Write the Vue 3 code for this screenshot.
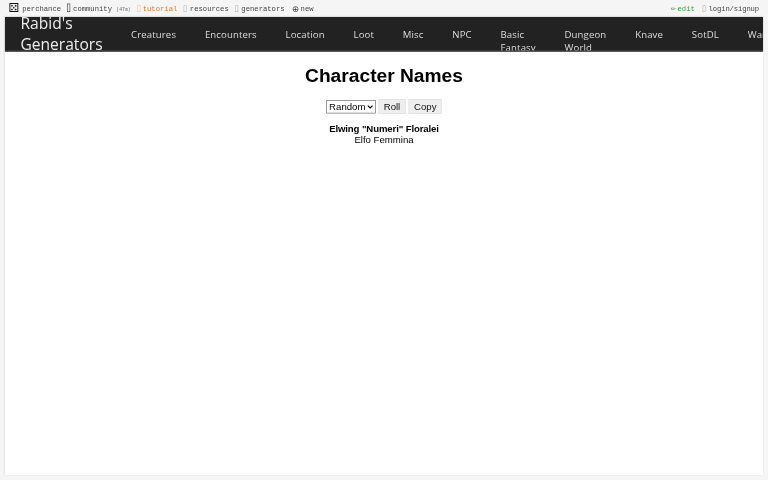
<script setup>
const navItems = ['Creatures', 'Encounters', 'Location', 'Loot', 'Misc', 'NPC', 'Basic Fantasy', 'Dungeon World', 'Knave', 'SotDL', 'Warlock']
</script>

<template>
  <div class="viewport">
    <div class="page">
      <header class="topbar">
        <div class="links">
          <span class="die">⚄</span>
          <a class="link">perchance</a>
          <span class="tofu dark"></span>
          <a class="link">community <small>(47m)</small></a>
          <span class="tofu peach"></span>
          <a class="link orange">tutorial</a>
          <span class="tofu"></span>
          <a class="link">resources</a>
          <span class="tofu"></span>
          <a class="link">generators</a>
          <span class="plus">⊕</span>
          <a class="link">new</a>
        </div>
        <div class="links">
          <span class="pencil">✏</span>
          <a class="link green">edit</a>
          <span class="tofu last"></span>
          <a class="link login">login/signup</a>
        </div>
      </header>
      <div class="frame">
        <nav class="nav">
          <div class="brand">Rabid's Generators</div>
          <a v-for="item in navItems" :key="item" class="nav-item"><span>{{ item }}</span></a>
        </nav>
        <main class="main">
          <h1>Character Names</h1>
          <div class="controls">
            <select class="select"><option>Random</option></select>
            <button class="btn">Roll</button>
            <button class="btn">Copy</button>
          </div>
          <div class="result">
            <b>Elwing "Numeri" Floralei</b>
            <div>Elfo Femmina</div>
          </div>
        </main>
      </div>
    </div>
  </div>
</template>

<style>
html, body { margin: 0; padding: 0; background: #f5f5f5; overflow: hidden; }
</style>

<style scoped>
.viewport { width: 768px; height: 480px; overflow: hidden; }
.page { width: 1280px; height: 800px; display: flex; flex-direction: column; background: #f5f5f5; overflow: hidden; transform: scale(0.6); transform-origin: 0 0; filter: blur(0.35px); }
.topbar { flex: none; height: 28px; display: flex; justify-content: space-between; align-items: center; padding: 1px 15px 0 14px; font-family: "Liberation Mono", monospace; font-size: 12px; color: #444; box-sizing: border-box; }
.links { display: flex; align-items: center; }
.link { white-space: pre; }
.link small { font-size: 8px; color: #666; }
.die { font-family: "DejaVu Sans", sans-serif; font-size: 20px; line-height: 20px; width: 23px; color: #111; margin-top: -3px; }
.tofu { display: inline-block; box-sizing: border-box; border: 1px solid #bbb; height: 11px; width: 5px; margin: 0 5px 0 11px; }
.dark { border-color: #333; height: 14px; margin: -4px 5px 0 10px; }
.peach { border-color: #f0c4a4; margin-right: 4px; }
.last { margin-left: 13px; }
.orange { color: #e27a2c; }
.green { color: #3a9a3a; }
.login { letter-spacing: -0.2px; }
.plus { font-family: "DejaVu Sans", sans-serif; font-size: 14px; margin: 0 3px 0 12px; }
.pencil { font-family: "DejaVu Sans", sans-serif; font-size: 10px; color: #3a9a3a; margin-right: 3px; }
.frame { width: 1264px; height: 764px; margin-left: 8px; background: #fff; box-shadow: 0 0 3px rgba(0,0,0,.2); display: flex; flex-direction: column; overflow: hidden; }
.nav { flex: none; height: 58px; background: #222; display: flex; align-items: center; overflow: hidden; font-family: "Open Sans", sans-serif; color: #ddd; box-sizing: border-box; padding: 2px 0 0 26px; border-bottom: 2px solid #444; }
.brand { flex: none; width: 138px; margin-right: 22.5px; font-size: 26px; line-height: 35px; color: #eee; }
.nav-item { flex: 0 0 auto; height: 22px; padding: 0 24px; font-size: 16px; line-height: 22px; letter-spacing: 0.2px; }
.nav-item span { display: block; width: min-content; }
.main { flex: 1; text-align: center; font-family: "Liberation Sans", sans-serif; color: #000; }
h1 { margin: 21px 0 0; font-size: 32px; line-height: 37px; font-weight: bold; }
.controls { margin-top: 21px; display: flex; justify-content: center; align-items: center; gap: 5px; }
.select { font-family: "Liberation Sans", sans-serif; font-size: 16px; height: 22px; width: 82px; padding: 0; background: #fff; border: 1px solid #555; color: #000; }
.btn { font-family: "Liberation Sans", sans-serif; font-size: 16px; height: 25px; padding: 0 8px; border: 1px solid #ddd; background: #eee; color: #111; }
.result { margin-top: 16px; font-size: 16px; line-height: 18px; }
.result b { letter-spacing: -0.2px; }
</style>
